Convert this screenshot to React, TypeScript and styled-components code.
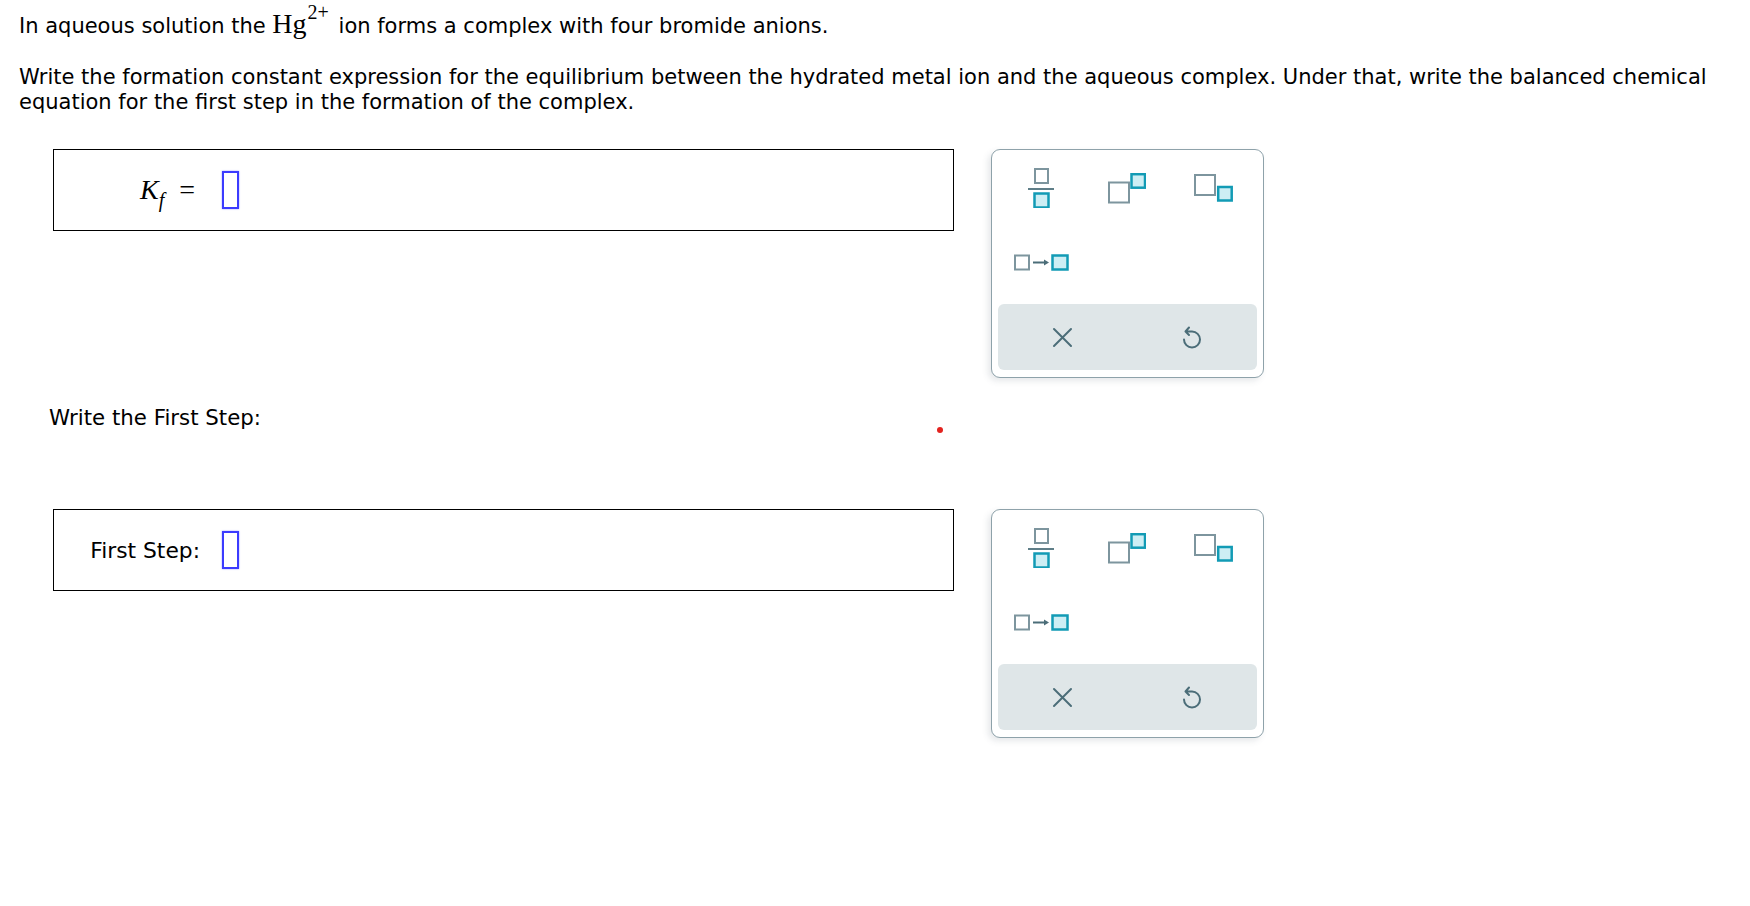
import React from "react";
import styled, { createGlobalStyle } from "styled-components";

const GlobalStyle = createGlobalStyle`
  html, body {
    margin: 0;
    padding: 0;
    background: #fff;
  }
  body {
    font-family: "DejaVu Sans", Verdana, sans-serif;
    color: #000;
  }
`;

const Page = styled.div`
  padding: 12px 19px 40px 19px;
  width: 1750px;
  box-sizing: border-box;
`;

const Para = styled.p<{ $gap?: number }>`
  margin: 0 0 ${(p) => p.$gap ?? 0}px 0;
  font-size: 21px;
  line-height: 25px;
`;

const Serif = styled.span`
  font-family: "Liberation Serif", "Times New Roman", serif;
  font-size: 28px;
  line-height: 0;
`;

const Sup = styled.sup`
  font-family: "Liberation Serif", "Times New Roman", serif;
  font-size: 20px;
  line-height: 0;
  vertical-align: 14px;
  margin-left: 1px;
  margin-right: 3px;
`;

const Row = styled.div`
  display: flex;
  align-items: flex-start;
  gap: 37px;
  margin-left: 34px;
`;

const AnswerBox = styled.div`
  width: 901px;
  height: 82px;
  box-sizing: border-box;
  border: 1px solid #000;
  display: flex;
  align-items: center;
  gap: 22px;
`;

const Label = styled.div<{ $math?: boolean }>`
  width: 146px;
  text-align: right;
  font-size: ${(p) => (p.$math ? 21 : 21.8)}px;
  padding-right: ${(p) => (p.$math ? 5 : 0)}px;
  box-sizing: border-box;
  white-space: nowrap;
`;

const MathK = styled.span`
  font-family: "Liberation Serif", "Times New Roman", serif;
  font-style: italic;
  font-size: 28px;
`;

const MathSub = styled.sub`
  font-family: "Liberation Serif", "Times New Roman", serif;
  font-style: italic;
  font-size: 20px;
  line-height: 0;
  vertical-align: -8px;
`;

const MathEq = styled.span`
  font-family: "Liberation Serif", "Times New Roman", serif;
  font-size: 28px;
  margin-left: 15px;
`;

const Slot = styled.div`
  width: 17px;
  height: 38px;
  box-sizing: border-box;
  border: 2px solid #3b3bff;
  box-shadow: 0 0 1.5px rgba(70, 70, 255, 0.6);
`;

const Palette = styled.div`
  width: 273px;
  height: 229px;
  box-sizing: border-box;
  border: 1px solid #8ea2aa;
  border-radius: 9px;
  background: #fff;
  box-shadow: -3px 3px 6px rgba(60, 80, 90, 0.13);
  padding: 1px 6px 7px 6px;
  display: flex;
  flex-direction: column;
`;

const IconGrid = styled.div`
  display: grid;
  grid-template-columns: repeat(3, 1fr);
  grid-template-rows: 74px 74px;
`;

const IconButton = styled.button`
  border: none;
  background: transparent;
  padding: 0;
  display: flex;
  align-items: center;
  justify-content: center;
  cursor: pointer;
`;

const ActionBar = styled.div`
  margin-top: 5px;
  height: 66px;
  border-radius: 6px;
  background: #dfe6e8;
  display: grid;
  grid-template-columns: 1fr 1fr;
`;

const StepLabelRow = styled.div`
  display: flex;
  justify-content: space-between;
  align-items: flex-end;
  width: 894px;
  margin: 27px 0 79px 30px;
  font-size: 21.3px;
  line-height: 25px;
`;

const RedDot = styled.span`
  width: 6px;
  height: 6px;
  border-radius: 50%;
  background: #e3231f;
  transform: translateY(3px);
`;

const GREY = "#7d959e";
const TEAL = "#129bb5";
const TEAL_FILL = "#cdeef4";
const DARK = "#4b6d78";

const FractionIcon = () => (
  <svg width="26" height="40" viewBox="0 0 26 40">
    <rect x="7" y="1" width="13" height="14" fill="#fff" stroke={GREY} strokeWidth="2" />
    <line x1="0" y1="21" x2="26" y2="21" stroke="#5f7e88" strokeWidth="2" />
    <rect x="6.5" y="25.5" width="14" height="14" fill={TEAL_FILL} stroke={TEAL} strokeWidth="2.5" />
  </svg>
);

const SuperIcon = () => (
  <svg width="38" height="31" viewBox="0 0 38 31">
    <rect x="1" y="9.5" width="20" height="20" fill="#fff" stroke={GREY} strokeWidth="2" />
    <rect x="23.5" y="1.2" width="13.5" height="13.5" fill={TEAL_FILL} stroke={TEAL} strokeWidth="2.5" />
  </svg>
);

const SubIcon = () => (
  <svg width="39" height="28" viewBox="0 0 39 28">
    <rect x="1" y="1" width="20" height="20" fill="#fff" stroke={GREY} strokeWidth="2" />
    <rect x="24.2" y="13" width="13.5" height="13.5" fill={TEAL_FILL} stroke={TEAL} strokeWidth="2.5" />
  </svg>
);

const ArrowIcon = () => (
  <svg width="55" height="17" viewBox="0 0 55 17">
    <rect x="1" y="1.5" width="14" height="14" fill="#fff" stroke={GREY} strokeWidth="2" />
    <line x1="19" y1="8.5" x2="32" y2="8.5" stroke={DARK} strokeWidth="2" />
    <path d="M30 5.5 L35 8.5 L30 11.5 Z" fill={DARK} />
    <rect x="38.5" y="1.5" width="15" height="14" fill={TEAL_FILL} stroke={TEAL} strokeWidth="2.5" />
  </svg>
);

const ClearIcon = () => (
  <svg width="21" height="21" viewBox="0 0 21 21">
    <path d="M2 2 L19 19 M19 2 L2 19" stroke={DARK} strokeWidth="2" strokeLinecap="round" />
  </svg>
);

const UndoIcon = () => (
  <svg width="24" height="27" viewBox="0 0 24 27">
    <path
      d="M9 3.5 L5.5 7.5 L9 11 M5.5 7.5 H12 A8 8 0 1 1 4 15.5"
      fill="none"
      stroke={DARK}
      strokeWidth="2"
      strokeLinecap="round"
      strokeLinejoin="round"
    />
  </svg>
);

function Tools() {
  return (
    <Palette>
      <IconGrid>
        <IconButton aria-label="fraction"><FractionIcon /></IconButton>
        <IconButton aria-label="superscript"><SuperIcon /></IconButton>
        <IconButton aria-label="subscript"><SubIcon /></IconButton>
        <IconButton aria-label="reaction arrow"><ArrowIcon /></IconButton>
      </IconGrid>
      <ActionBar>
        <IconButton aria-label="clear"><ClearIcon /></IconButton>
        <IconButton aria-label="undo"><UndoIcon /></IconButton>
      </ActionBar>
    </Palette>
  );
}

export default function App() {
  return (
    <>
      <GlobalStyle />
      <Page>
        <Para $gap={26}>
          In aqueous solution the <Serif>Hg</Serif>
          <Sup>2+</Sup> ion forms a complex with four bromide anions.
        </Para>
        <Para $gap={34}>
          Write the formation constant expression for the equilibrium between the hydrated metal ion and the aqueous
          complex. Under that, write the balanced chemical equation for the first step in the formation of the complex.
        </Para>

        <Row>
          <AnswerBox>
            <Label $math>
              <MathK>K</MathK>
              <MathSub>f</MathSub>
              <MathEq>=</MathEq>
            </Label>
            <Slot />
          </AnswerBox>
          <Tools />
        </Row>

        <StepLabelRow>
          <span>Write the First Step:</span>
          <RedDot />
        </StepLabelRow>

        <Row>
          <AnswerBox>
            <Label>First Step:</Label>
            <Slot />
          </AnswerBox>
          <Tools />
        </Row>
      </Page>
    </>
  );
}
